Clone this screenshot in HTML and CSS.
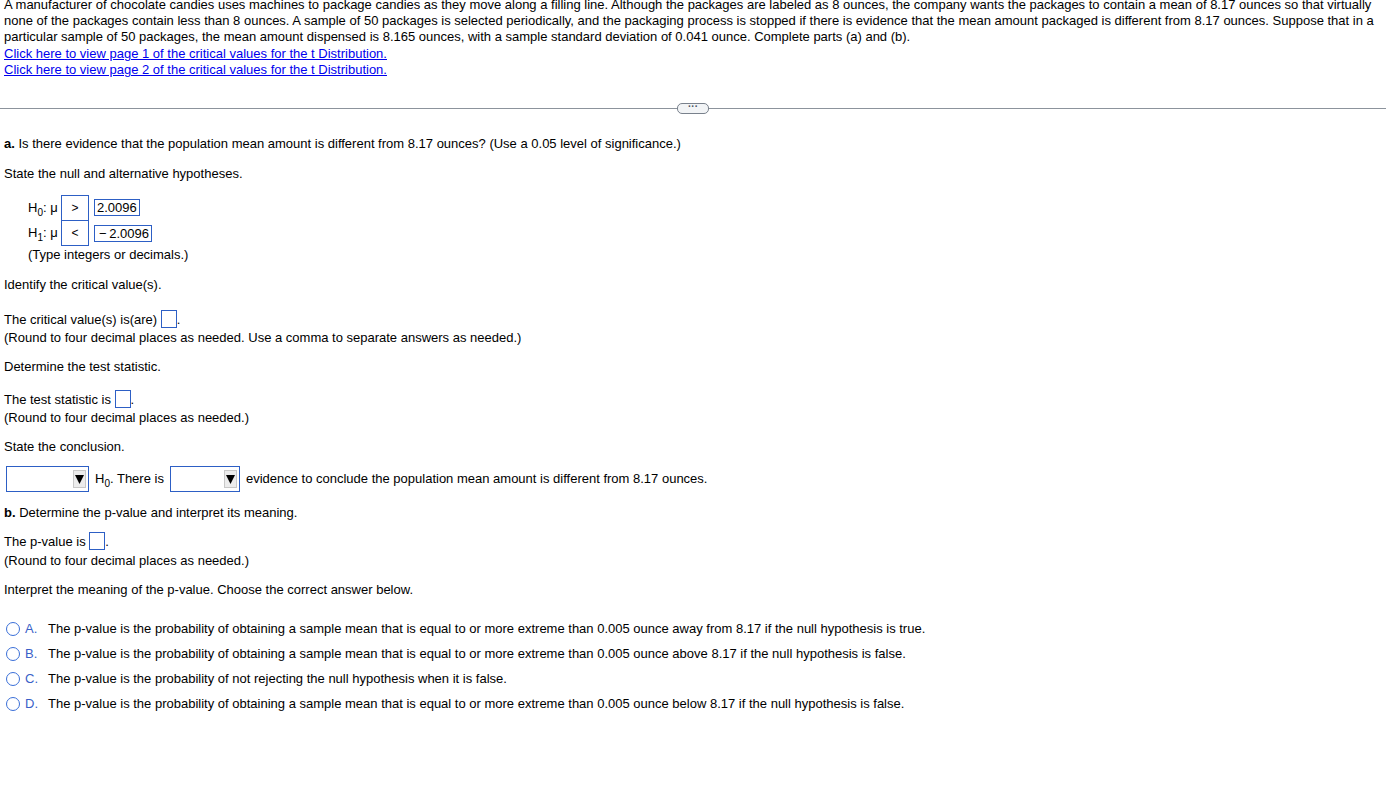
FILE: index.html
```html
<!DOCTYPE html>
<html>
<head>
<meta charset="utf-8">
<link rel="stylesheet" href="styles.css">
</head>
<body>
<div class="intro">
  <p>A manufacturer of chocolate candies uses machines to package candies as they move along a filling line. Although the packages are labeled as 8 ounces, the company wants the packages to contain a mean of 8.17 ounces so that virtually none of the packages contain less than 8 ounces. A sample of 50 packages is selected periodically, and the packaging process is stopped if there is evidence that the mean amount packaged is different from 8.17 ounces. Suppose that in a particular sample of 50 packages, the mean amount dispensed is 8.165 ounces, with a sample standard deviation of 0.041 ounce. Complete parts (a) and (b).</p>
  <a href="#" class="link l1">Click here to view page 1 of the critical values for the t Distribution.</a>
  <a href="#" class="link">Click here to view page 2 of the critical values for the t Distribution.</a>
</div>
<div class="divider">
  <span class="line"></span>
  <span class="pill">&middot;&middot;&middot;</span>
  <span class="line"></span>
</div>
<div class="work">
  <p class="q1"><b>a.</b> Is there evidence that the population mean amount is different from 8.17 ounces? (Use a 0.05 level of significance.)</p>
  <p class="s1">State the null and alternative hypotheses.</p>
  <div class="hyp">
    <div class="hrow r0">
      <span class="hlabel">H<sub>0</sub>: &mu;</span>
      <span class="op op0">&gt;</span>
      <span class="val v0">2.0096</span>
    </div>
    <div class="hrow r1">
      <span class="hlabel">H<sub>1</sub>: &mu;</span>
      <span class="op op1">&lt;</span>
      <span class="val v1">&minus;&thinsp;2.0096</span>
    </div>
    <p class="hint">(Type integers or decimals.)</p>
  </div>
  <p class="s2">Identify the critical value(s).</p>
  <p class="s3">The critical value(s) is(are) <span class="box"></span>.</p>
  <p class="hint2 ha">(Round to four decimal places as needed. Use a comma to separate answers as needed.)</p>
  <p class="s4">Determine the test statistic.</p>
  <p class="s5">The test statistic is <span class="box"></span>.</p>
  <p class="hint2 ha">(Round to four decimal places as needed.)</p>
  <p class="s4">State the conclusion.</p>
  <div class="concl">
    <span class="sel w1"><span class="arr"><svg width="9" height="10" viewBox="0 0 9 10"><path d="M0 1h9L4.5 10z" fill="#000"/></svg></span></span>
    <span class="ct">H<sub>0</sub>. There is</span>
    <span class="sel w2"><span class="arr"><svg width="9" height="10" viewBox="0 0 9 10"><path d="M0 1h9L4.5 10z" fill="#000"/></svg></span></span>
    <span class="ct">evidence to conclude the population mean amount is different from 8.17 ounces.</span>
  </div>
  <p class="q2"><b>b.</b> Determine the p-value and interpret its meaning.</p>
  <p class="s6">The p-value is <span class="box"></span>.</p>
  <p class="hint2">(Round to four decimal places as needed.)</p>
  <p class="s4">Interpret the meaning of the p-value. Choose the correct answer below.</p>
  <ul class="opts">
    <li><span class="radio"></span><span class="let">A.</span><span>The p-value is the probability of obtaining a sample mean that is equal to or more extreme than 0.005 ounce away from 8.17 if the null hypothesis is true.</span></li>
    <li><span class="radio"></span><span class="let">B.</span><span>The p-value is the probability of obtaining a sample mean that is equal to or more extreme than 0.005 ounce above 8.17 if the null hypothesis is false.</span></li>
    <li><span class="radio"></span><span class="let">C.</span><span>The p-value is the probability of not rejecting the null hypothesis when it is false.</span></li>
    <li><span class="radio"></span><span class="let">D.</span><span>The p-value is the probability of obtaining a sample mean that is equal to or more extreme than 0.005 ounce below 8.17 if the null hypothesis is false.</span></li>
  </ul>
</div>
</body>
</html>
```

FILE: styles.css
```css
html, body {
  margin: 0;
  padding: 0;
  background: #fff;
}
body {
  font-family: "Liberation Sans", Arial, sans-serif;
  font-size: 13px;
  line-height: 16px;
  color: #000;
}
p { margin: 0; }
sub { font-size: 10px; line-height: 0; vertical-align: -4px; }
.intro {
  margin-top: -3px;
  padding: 0 12px 0 4px;
}
.link {
  display: block;
  color: #0000ee;
  text-decoration: underline;
}
.l1 { margin-top: 1px; }
.divider {
  display: flex;
  align-items: center;
  margin-top: 24px;
  height: 12px;
}
.line {
  flex: 1;
  height: 1px;
  background: #8c939c;
}
.pill {
  width: 30px;
  height: 9px;
  border: 1px solid #79818c;
  border-radius: 5px;
  background: #f2f4f6;
  font-size: 10px;
  line-height: 6px;
  text-align: center;
  color: #4b5563;
  font-weight: bold;
}
.work { padding-left: 4px; }
.q1 { margin-top: 22px; }
.s1 { margin-top: 14px; }
.hyp { padding-left: 24px; margin-top: 13px; }
.hrow { display: flex; align-items: center; }
.hlabel { width: 33px; }
.r0 { height: 25px; }
.r1 { height: 26px; }
.op {
  width: 28px;
  border: 1px solid #2d5fc5;
  box-sizing: border-box;
  align-self: stretch;
  display: flex;
  align-items: center;
  justify-content: center;
  font-size: 12px;
}
.op0 { border-bottom: none; }
.val {
  border: 1px solid #2d5fc5;
  padding: 0 2px;
  line-height: 15px;
  margin-left: 5px;
}
.v1 { margin-left: 5px; padding: 0 2px 0 4px; }
.hint { margin-top: 1px; }
.s2 { margin-top: 14px; }
.s3 { margin-top: 18px; }
.box {
  display: inline-block;
  width: 16px;
  height: 18px;
  margin: -1px 0;
  border: 1px solid #2d5fc5;
  vertical-align: -3px;
  box-sizing: border-box;
}
.hint2 { margin-top: 3px; }
.hint2.ha { margin-top: 2px; }
.s4 { margin-top: 13px; }
.s5 { margin-top: 16px; }
.s6 { margin-top: 12px; }
.concl {
  display: flex;
  align-items: center;
  margin-top: 11px;
  padding-left: 2px;
  height: 26px;
}
.sel {
  height: 26px;
  border: 1px solid #2d5fc5;
  box-sizing: border-box;
  display: flex;
  justify-content: flex-end;
  align-items: center;
  padding-right: 2px;
}
.w1 { width: 83px; }
.w2 { width: 70px; }
.arr {
  width: 13px;
  height: 18px;
  background: #ececec;
  border: 1px solid #c8c8c8;
  box-sizing: border-box;
  display: flex;
  align-items: center;
  justify-content: center;
}
.ct { margin: 0 6px; }
.q2 { margin-top: 13px; }
.opts {
  list-style: none;
  margin: 18px 0 0 0;
  padding: 0 0 0 2px;
}
.opts li {
  display: flex;
  align-items: center;
  height: 25px;
}
.radio {
  width: 12px;
  height: 12px;
  border: 1.5px solid #3a6fd8;
  border-radius: 50%;
  margin-right: 5px;
}
.let {
  color: #3a5fc8;
  width: 23px;
}
```
